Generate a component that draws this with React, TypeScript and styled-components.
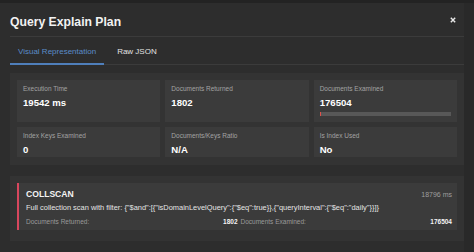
import React from "react";
import styled, { createGlobalStyle } from "styled-components";

const Global = createGlobalStyle`
  html, body { margin: 0; padding: 0; background: #262626; }
  body { font-family: "Liberation Sans", Arial, sans-serif; }
  * { box-sizing: border-box; }
`;

const Page = styled.div`
  display: flex;
  width: 474px;
  height: 252px;
  padding-top: 3px;
  background: #232323;
  overflow: hidden;
`;

const Modal = styled.div`
  width: 464px;
  height: 249px;
  background: #2d2d2d;
  padding-left: 10px;
  display: flex;
  flex-direction: column;
`;

const Track = styled.div`
  flex: 1;
  background: #292929;
`;

const Header = styled.div`
  height: 34px;
  display: flex;
  align-items: center;
  justify-content: space-between;
  padding: 4px 8px 0 0;
  border-bottom: 1px solid #3b3b3b;
`;

const Title = styled.h1`
  margin: 0;
  font-size: 12.2px;
  font-weight: 700;
  color: #f2f2f2;
`;

const Close = styled.button`
  border: 0;
  background: none;
  padding: 0;
  width: 6px;
  height: 6px;
  display: flex;
  margin-top: -3px;
`;

const Tabs = styled.div`
  height: 28px;
  display: flex;
  gap: 5px;
  border-bottom: 1px solid #3b3b3b;
`;

const Tab = styled.div<{ $active?: boolean }>`
  padding: 2px 8px 0;
  display: flex;
  align-items: center;
  font-size: 8px;
  color: ${(p) => (p.$active ? "#5b8cc8" : "#e2e2e2")};
  border-bottom: 2px solid ${(p) => (p.$active ? "#4f7fbb" : "transparent")};
  margin-bottom: -1px;
`;

const Panel = styled.div<{ $top: number; $bottom: number }>`
  margin-top: ${(p) => p.$top}px;
  background: #333333;
  padding: 7px 7px ${(p) => p.$bottom}px;
`;

const Grid = styled.div`
  display: grid;
  grid-template-columns: repeat(3, 1fr);
  gap: 5px;
`;

const Card = styled.div`
  background: #3b3b3b;
  padding: 5px 6px 2px;
  display: flex;
  flex-direction: column;
`;

const Label = styled.div`
  font-size: 6.5px;
  line-height: 8px;
  color: #a3a3a3;
`;

const Value = styled.div`
  margin-top: 4px;
  font-size: 9.6px;
  line-height: 11px;
  font-weight: 700;
  color: #ffffff;
`;

const Bar = styled.div`
  margin: 4px 0 4px;
  height: 4px;
  background: #585858;
`;

const BarFill = styled.div`
  height: 100%;
  background: #e0504a;
`;

const Stage = styled.div`
  background: #3b3b3b;
  border-left: 2px solid #d9475e;
  padding: 5px 5px 4px 7px;
  margin-bottom: 4px;
`;

const StageHead = styled.div`
  display: flex;
  justify-content: space-between;
  align-items: center;
  height: 12px;
`;

const StageName = styled.div`
  font-size: 8.6px;
  font-weight: 700;
  color: #f4f4f4;
`;

const StageTime = styled.div`
  font-size: 7px;
  color: #9e9e9e;
`;

const Desc = styled.div`
  margin-top: 3px;
  font-size: 7.45px;
  line-height: 10px;
  color: #e4e4e4;
  white-space: nowrap;
`;

const StageStats = styled.div`
  margin-top: 3px;
  display: grid;
  grid-template-columns: 1fr 1fr;
  gap: 3px;
`;

const StatPair = styled.div`
  display: flex;
  justify-content: space-between;
  align-items: center;
  height: 10px;
`;

const PairLabel = styled.span`
  font-size: 6.5px;
  color: #9a9a9a;
`;

const PairValue = styled.span`
  font-size: 6.5px;
  font-weight: 700;
  color: #f4f4f4;
`;

const stats = [
  { label: "Execution Time", value: "19542 ms" },
  { label: "Documents Returned", value: "1802" },
  { label: "Documents Examined", value: "176504", bar: 1802 / 176504 },
  { label: "Index Keys Examined", value: "0" },
  { label: "Documents/Keys Ratio", value: "N/A" },
  { label: "Is Index Used", value: "No" },
];

export default function App() {
  return (
    <>
      <Global />
      <Page>
        <Modal>
          <Header>
            <Title>Query Explain Plan</Title>
            <Close aria-label="Close">
              <svg width="6" height="6" viewBox="0 0 6 6">
                <path d="M0.8 0.8 L5.2 5.2 M5.2 0.8 L0.8 5.2" stroke="#e8e8e8" strokeWidth="1.4" />
              </svg>
            </Close>
          </Header>
          <Tabs>
            <Tab $active>Visual Representation</Tab>
            <Tab>Raw JSON</Tab>
          </Tabs>
          <Panel $top={8} $bottom={8}>
            <Grid>
              {stats.map((s) => (
                <Card key={s.label}>
                  <Label>{s.label}</Label>
                  <Value>{s.value}</Value>
                  {s.bar !== undefined && (
                    <Bar>
                      <BarFill style={{ width: `${s.bar * 100}%` }} />
                    </Bar>
                  )}
                </Card>
              ))}
            </Grid>
          </Panel>
          <Panel $top={11} $bottom={7}>
            <Stage>
              <StageHead>
                <StageName>COLLSCAN</StageName>
                <StageTime>18796 ms</StageTime>
              </StageHead>
              <Desc>
                {'Full collection scan with filter: {"$and":[{"isDomainLevelQuery":{"$eq":true}},{"queryInterval":{"$eq":"daily"}}]}'}
              </Desc>
              <StageStats>
                <StatPair>
                  <PairLabel>Documents Returned:</PairLabel>
                  <PairValue>1802</PairValue>
                </StatPair>
                <StatPair>
                  <PairLabel>Documents Examined:</PairLabel>
                  <PairValue>176504</PairValue>
                </StatPair>
              </StageStats>
            </Stage>
          </Panel>
        </Modal>
        <Track />
      </Page>
    </>
  );
}
